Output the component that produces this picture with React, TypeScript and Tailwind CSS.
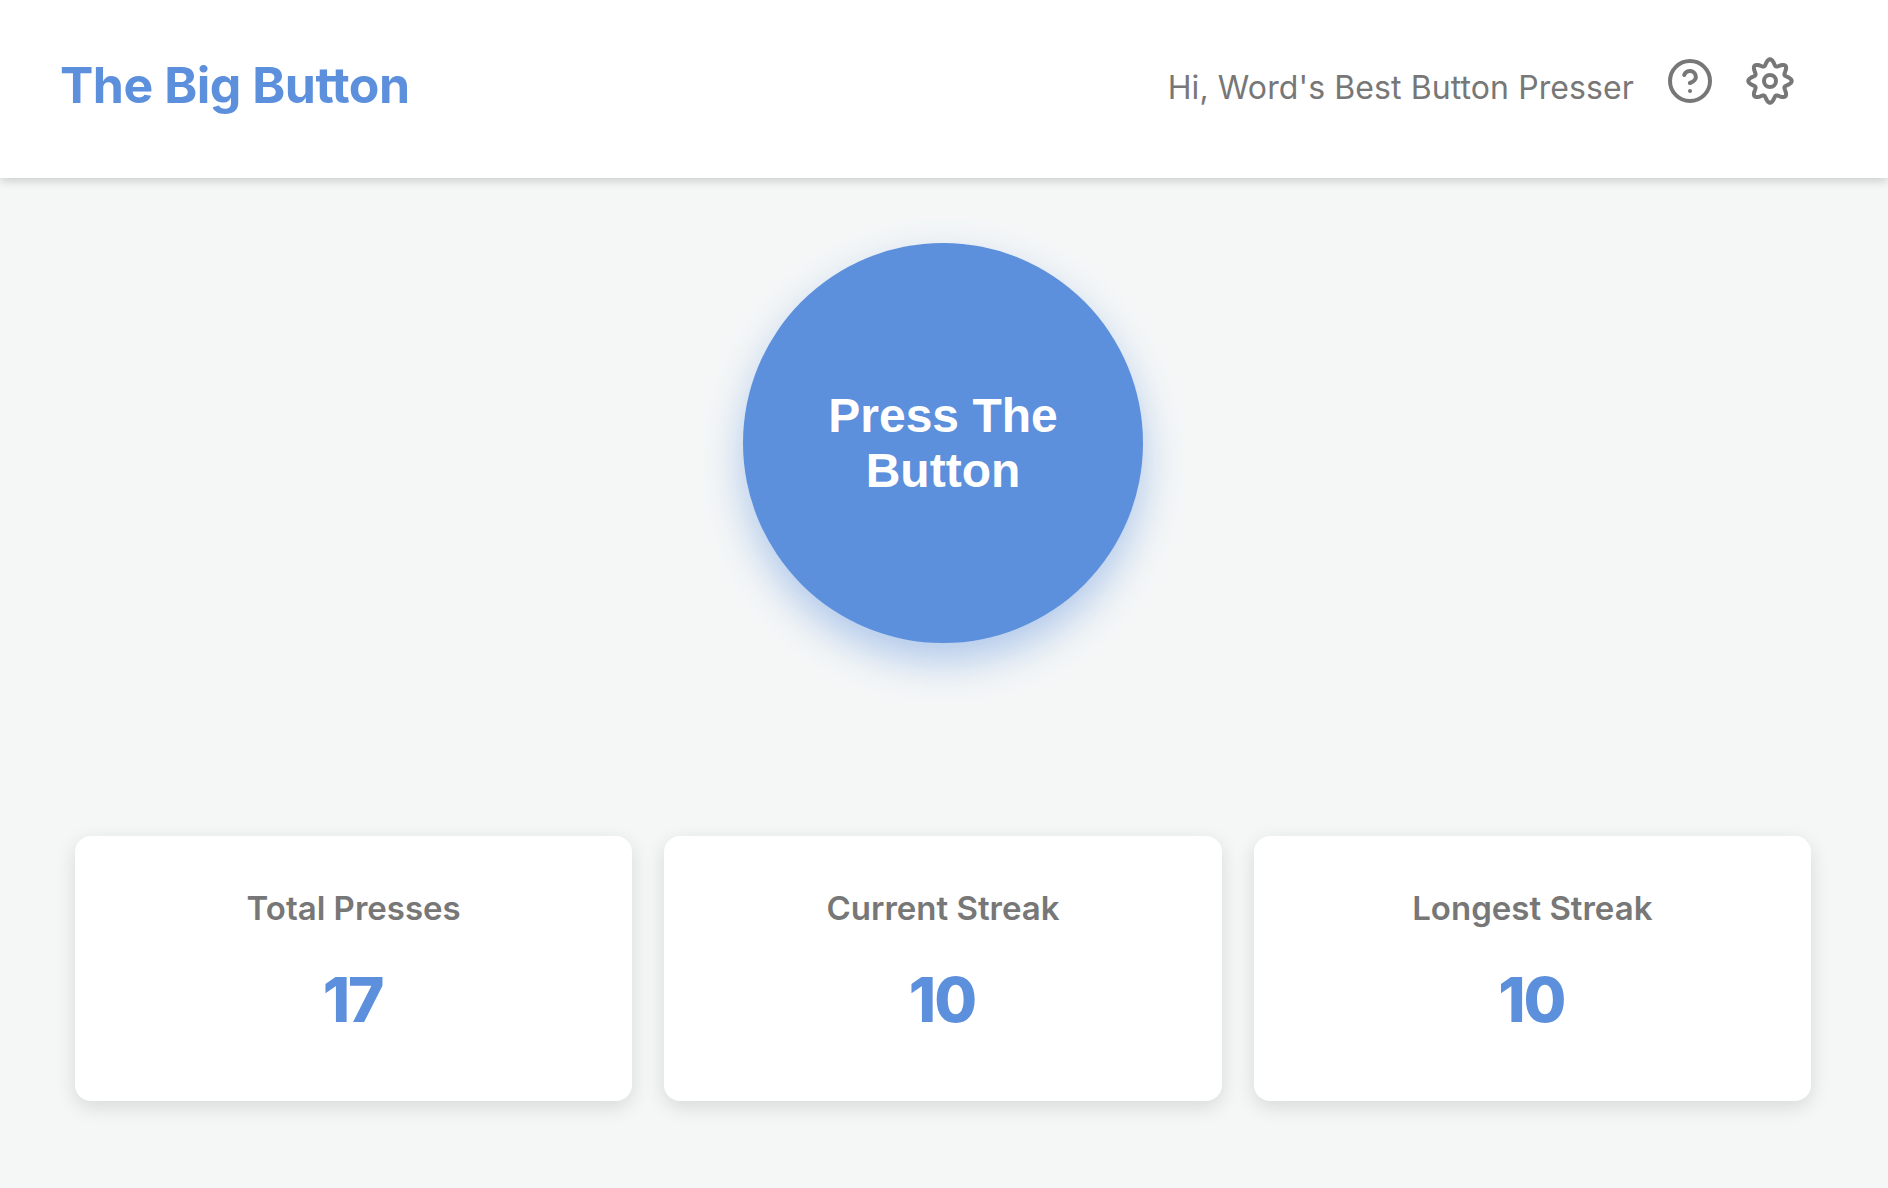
import { CircleHelp } from 'lucide-react';

const stats = [
    { label: 'Total Presses', value: 17 },
    { label: 'Current Streak', value: 10 },
    { label: 'Longest Streak', value: 10 },
];

// eight rounded lobes around the centre of a 48 box
const gearPoints = Array.from({ length: 144 }, (_, i) => {
    const a = (i / 144) * Math.PI * 2;
    const r = 18.7 + 3 * Math.cos(8 * a);
    return `${(24 + r * Math.sin(a)).toFixed(2)},${(24 - r * Math.cos(a)).toFixed(2)}`;
}).join(' ');

function Gear() {
    return (
        <svg width="48" height="48" viewBox="0 0 48 48" fill="none" stroke="#777777" strokeWidth="4" strokeLinejoin="round" className="-mt-[17px] ml-[32px]">
            <polygon points={gearPoints} />
            <circle cx="24" cy="24" r="6" />
        </svg>
    );
}

export default function App() {
    return (
        <div className="flex min-h-[1188px] flex-col bg-[#f5f7f7] font-['Inter',sans-serif]">
            <header className="flex h-[178px] items-center justify-between bg-white pl-[60px] pr-[94px] shadow-[0_2px_10px_rgba(0,0,0,0.2)]">
                <h1 className="-mt-[8px] text-[50px] font-bold tracking-[-0.5px] text-[#5c8fdc]">The Big Button</h1>
                <div className="flex items-center">
                    <span className="-mt-[3px] mr-[32px] text-[32px] tracking-[0.1px] text-[#777777]">Hi, Word's Best Button Presser</span>
                    <CircleHelp size={48} strokeWidth={2} className="-mt-[17px] text-[#777777]" />
                    <Gear />
                </div>
            </header>

            <main className="flex flex-col items-center pr-[2px] pt-[65px]">
                <button className="flex h-[400px] w-[400px] items-center justify-center rounded-full bg-[#5c8fdc] px-[60px] text-center font-['Liberation_Sans',sans-serif] text-[48px] font-bold leading-[55px] text-white shadow-[0_18px_40px_rgba(92,143,220,0.45)]">
                    Press The Button
                </button>
            </main>

            <section className="mt-[193px] grid grid-cols-3 gap-[32px] pl-[75px] pr-[77px]">
                {stats.map(s => (
                    <div key={s.label} className="flex h-[265px] flex-col items-center rounded-[16px] bg-white pt-[48px] shadow-[0_6px_20px_rgba(0,0,0,0.12)]">
                        <div className="text-[33px] font-semibold text-[#777777]">{s.label}</div>
                        <div className="mt-[27px] pr-[2px] text-[62px] font-extrabold leading-[77px] tracking-[-2px] text-[#5c8fdc]">{s.value}</div>
                    </div>
                ))}
            </section>
        </div>
    );
}
